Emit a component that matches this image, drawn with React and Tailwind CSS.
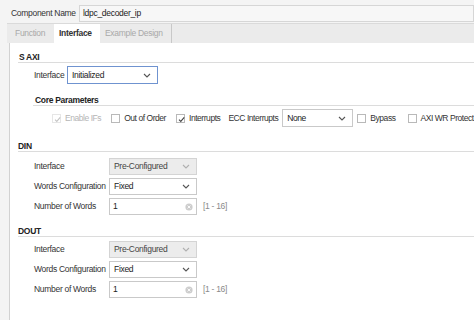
import React from "react";

const Chevron = ({ color = "#555" }) => (
  <svg width="8" height="5" viewBox="0 0 8 5" className="shrink-0">
    <path d="M1 1l3 3 3-3" fill="none" stroke={color} strokeWidth="1.1" />
  </svg>
);

const Check = ({ color = "#444" }) => (
  <svg width="9" height="9" viewBox="0 0 9 9" className="absolute left-0 top-0">
    <path d="M2 4.6l1.8 1.8L7.2 2.4" fill="none" stroke={color} strokeWidth="1.1" />
  </svg>
);

function Checkbox({ label, checked, disabled, className = "" }) {
  return (
    <div className={"flex shrink-0 items-center gap-[4px] whitespace-nowrap " + className}>
      <div
        className={
          "relative h-[9px] w-[9px] shrink-0 bg-white border " +
          (disabled ? "border-[#e6e6e6]" : "border-[#b9b9b9]")
        }
      >
        {checked && <Check color={disabled ? "#c4c4c4" : "#444"} />}
      </div>
      <span className={disabled ? "text-[#b5b5b5]" : "text-[#333]"}>{label}</span>
    </div>
  );
}

function Select({ value, className = "", disabled, focused }) {
  let cls = "border-[#c9c9c9] bg-white text-[#222]";
  if (disabled) cls = "border-[#d4d4d4] bg-[#ececec] text-[#444]";
  if (focused) cls = "border-[#6f93d0] bg-white text-[#222]";
  return (
    <div className={"flex shrink-0 items-center justify-between border pl-[4px] pr-[6px] " + cls + " " + className}>
      <span>{value}</span>
      <Chevron color={disabled ? "#b0b0b0" : "#555"} />
    </div>
  );
}

function ParamRows() {
  return (
    <div className="ml-[16px] flex flex-col gap-[3px]">
      <div className="flex items-center">
        <span className="w-[75px] text-[#333]">Interface</span>
        <Select value="Pre-Configured" disabled className="h-[17px] w-[88px]" />
      </div>
      <div className="flex items-center">
        <span className="w-[75px] text-[#333]">Words Configuration</span>
        <Select value="Fixed" className="h-[17px] w-[88px]" />
      </div>
      <div className="flex items-center">
        <span className="w-[75px] text-[#333]">Number of Words</span>
        <div className="flex h-[17px] w-[88px] items-center justify-between border border-[#c9c9c9] bg-white pl-[3px] pr-[3px] text-[#222]">
          <span>1</span>
          <svg width="8" height="8" viewBox="0 0 8 8">
            <circle cx="4" cy="4" r="3.6" fill="#cdcdcd" />
            <path d="M2.6 2.6l2.8 2.8M5.4 2.6L2.6 5.4" stroke="#fff" strokeWidth="0.9" />
          </svg>
        </div>
        <span className="ml-[6px] text-[#8a8a8a]">[1 - 16]</span>
      </div>
    </div>
  );
}

export default function App() {
  return (
    <div className="h-[320px] w-[474px] overflow-hidden bg-[#f4f4f4] font-['Liberation_Sans',Arial,sans-serif] text-[8.5px] leading-[11px] tracking-[-0.3px] text-[#333]">
      <div className="flex items-center pl-[11px] pt-[5px]">
        <span className="w-[68px] text-[#333]">Component Name</span>
        <div className="flex h-[17px] flex-1 items-center border border-[#d6d6d6] bg-[#f7f7f7] pl-[3px] text-[#222]">
          ldpc_decoder_ip
        </div>
      </div>

      <div className="ml-[7px] mt-[1px] flex h-[20px] items-stretch border-t border-[#dadada] bg-[#ebebeb]">
        <div className="flex w-[47px] items-center pl-[8px] text-[#a9a9a9]">Function</div>
        <div className="flex w-[46px] items-center bg-white pl-[5px] font-bold text-[#333]">Interface</div>
        <div className="flex w-[72px] items-center border-r border-[#c8c8c8] pl-[5px] text-[#a9a9a9]">
          Example Design
        </div>
      </div>

      <div className="ml-[9px] h-full border-l border-[#d2d2d2] bg-white pl-[8px]">
        <div className="pt-[8px]">
          <div className="h-[12px] border-b border-[#dcdcdc] pl-[1px] leading-[12px] font-bold text-[#222]">S AXI</div>
        </div>
        <div className="ml-[16px] mt-[3px] flex items-center gap-[3px]">
          <span className="w-[30px]">Interface</span>
          <Select value="Initialized" focused className="h-[18px] w-[91px]" />
        </div>

        <div className="ml-[15px] mt-[10px] h-[12px] border-b border-[#dcdcdc] pl-[2px] leading-[12px] font-bold text-[#222]">
          Core Parameters
        </div>
        <div className="ml-[34px] mt-[3px] flex h-[18px] items-center whitespace-nowrap tracking-[-0.45px]">
          <Checkbox label="Enable IFs" checked disabled />
          <Checkbox label="Out of Order" className="ml-[10px]" />
          <Checkbox label="Interrupts" checked className="ml-[10px]" />
          <div className="ml-[8px] flex shrink-0 items-center gap-[4px]">
            <span>ECC Interrupts</span>
            <Select value="None" className="h-[18px] w-[71px]" />
          </div>
          <Checkbox label="Bypass" className="ml-[4px]" />
          <Checkbox label="AXI WR Protect" className="ml-[12px]" />
        </div>

        <div className="mt-[14px] h-[11px] border-b border-[#dcdcdc] leading-[10px] font-bold text-[#222]">DIN</div>
        <div className="mt-[6px]">
          <ParamRows />
        </div>

        <div className="mt-[11px] h-[11px] border-b border-[#dcdcdc] leading-[10px] font-bold text-[#222]">DOUT</div>
        <div className="mt-[4px]">
          <ParamRows />
        </div>
      </div>
    </div>
  );
}
